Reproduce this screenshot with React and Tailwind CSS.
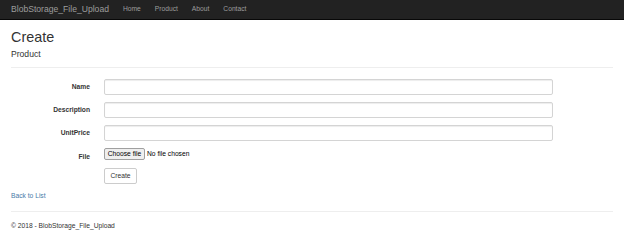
import React from 'react';

const fields = ['Name', 'Description', 'UnitPrice'];

const App = () => {
  return (
    <div className="w-[624px] h-[240px] bg-white text-[#333] overflow-hidden" style={{ fontFamily: '"Liberation Sans", Arial, sans-serif' }}>
      <nav className="h-[20px] bg-[#222] border-b border-[#080808] flex items-center pl-[11px]">
        <span className="text-[8.6px] text-[#9d9d9d] leading-none">BlobStorage_File_Upload</span>
        <ul className="flex ml-[7px]">
          <li className="px-[7px] text-[6.7px] text-[#9d9d9d] leading-none">Home</li>
          <li className="px-[7px] text-[6.7px] text-[#9d9d9d] leading-none">Product</li>
          <li className="px-[7px] text-[6.7px] text-[#9d9d9d] leading-none">About</li>
          <li className="px-[7px] text-[6.7px] text-[#9d9d9d] leading-none">Contact</li>
        </ul>
      </nav>

      <div className="px-[11px]">
        <h2 className="mt-[10px] text-[14.4px] leading-[1.1]">Create</h2>
        <h4 className="mt-[4px] text-[8.6px] leading-[1.1]">Product</h4>
        <hr className="mt-[8px] border-t border-[#eee]" />

        <div className="mt-[11px] flex flex-col gap-[7px]">
          {fields.map((f) => (
            <div key={f} className="flex items-center h-[16px]">
              <label className="w-[79px] text-right font-bold text-[6.7px]">{f}</label>
              <div className="ml-[14px] w-[449px] h-[16px] border border-[#d4d4d4] rounded-[2px] bg-white shadow-[inset_0_1px_1px_rgba(0,0,0,0.075)]" />
            </div>
          ))}
          <div className="flex items-start h-[13px]">
            <label className="w-[79px] text-right font-bold text-[6.7px] pt-[4px]">File</label>
            <div className="ml-[14px] flex items-center text-[6.7px]">
              <span className="h-[12px] w-[41px] flex items-center justify-center bg-[#efefef] border border-[#a0a0a0] rounded-[2px] text-black">Choose file</span>
              <span className="ml-[2px] text-black">No file chosen</span>
            </div>
          </div>
        </div>

        <div className="mt-[7px] pl-[93px] flex">
          <button className="h-[16px] w-[33px] border border-[#ccc] rounded-[2px] bg-white text-[6.7px] text-[#333]">Create</button>
        </div>

        <div className="mt-[6px] text-[6.7px] text-[#4a7aa8] leading-[11px]">Back to List</div>
        <hr className="mt-[10px] border-t border-[#eee]" />
        <div className="mt-[8px] text-[6.7px] leading-[11px]">© 2018 - BlobStorage_File_Upload</div>
      </div>
    </div>
  );
};

export default App;
